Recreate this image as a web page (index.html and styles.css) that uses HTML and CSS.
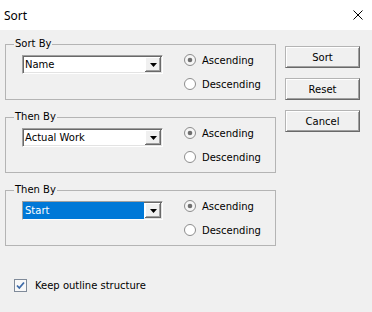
FILE: index.html
```html
<!DOCTYPE html>
<html>
<head>
<meta charset="utf-8">
<link rel="stylesheet" href="styles.css">
</head>
<body>
<div class="window">
  <div class="titlebar">
    <span class="title">Sort</span>
    <svg class="close" width="10" height="10" viewBox="0 0 10 10"><path d="M0.5 0.5 L9.5 9.5 M9.5 0.5 L0.5 9.5" stroke="#000" stroke-width="1"/></svg>
  </div>
  <div class="content">
    <div class="groups">
      <div class="group">
        <span class="group-label">Sort By</span>
        <div class="combo"><span class="combo-value">Name</span><span class="combo-btn"><svg width="7" height="4" viewBox="0 0 7 4"><polygon points="0,0 7,0 3.5,4" fill="#000"/></svg></span></div>
        <div class="radios">
          <div class="radio"><svg width="12" height="12" viewBox="0 0 12 12"><circle cx="6" cy="6" r="5.5" fill="#f6f6f6" stroke="#8c8c8c"/><circle cx="6" cy="6" r="2.3" fill="#6f6f6f"/></svg><span>Ascending</span></div>
          <div class="radio"><svg width="12" height="12" viewBox="0 0 12 12"><circle cx="6" cy="6" r="5.5" fill="#ffffff" stroke="#8c8c8c"/></svg><span>Descending</span></div>
        </div>
      </div>
      <div class="group">
        <span class="group-label">Then By</span>
        <div class="combo"><span class="combo-value">Actual Work</span><span class="combo-btn"><svg width="7" height="4" viewBox="0 0 7 4"><polygon points="0,0 7,0 3.5,4" fill="#000"/></svg></span></div>
        <div class="radios">
          <div class="radio"><svg width="12" height="12" viewBox="0 0 12 12"><circle cx="6" cy="6" r="5.5" fill="#f6f6f6" stroke="#8c8c8c"/><circle cx="6" cy="6" r="2.3" fill="#6f6f6f"/></svg><span>Ascending</span></div>
          <div class="radio"><svg width="12" height="12" viewBox="0 0 12 12"><circle cx="6" cy="6" r="5.5" fill="#ffffff" stroke="#8c8c8c"/></svg><span>Descending</span></div>
        </div>
      </div>
      <div class="group">
        <span class="group-label">Then By</span>
        <div class="combo"><span class="combo-value selected">Start</span><span class="combo-btn"><svg width="7" height="4" viewBox="0 0 7 4"><polygon points="0,0 7,0 3.5,4" fill="#000"/></svg></span></div>
        <div class="radios">
          <div class="radio"><svg width="12" height="12" viewBox="0 0 12 12"><circle cx="6" cy="6" r="5.5" fill="#f6f6f6" stroke="#8c8c8c"/><circle cx="6" cy="6" r="2.3" fill="#6f6f6f"/></svg><span>Ascending</span></div>
          <div class="radio"><svg width="12" height="12" viewBox="0 0 12 12"><circle cx="6" cy="6" r="5.5" fill="#ffffff" stroke="#8c8c8c"/></svg><span>Descending</span></div>
        </div>
      </div>
    </div>
    <div class="buttons">
      <button class="btn">Sort</button>
      <button class="btn">Reset</button>
      <button class="btn">Cancel</button>
    </div>
  </div>
  <div class="footer">
    <svg width="13" height="13" viewBox="0 0 13 13"><rect x="0.5" y="0.5" width="12" height="12" fill="#f8f8f8" stroke="#7f8a99"/><path d="M3 6.5 L5.3 9 L10 3.5" fill="none" stroke="#3d6aa8" stroke-width="1.8"/></svg>
    <span>Keep outline structure</span>
  </div>
</div>
</body>
</html>
```
FILE: styles.css
```css
body {
  margin: 0;
  background: #f0f0f0;
  font-family: "DejaVu Sans", sans-serif;
  font-size: 10px;
  color: #000;
}
.window {
  width: 372px;
  height: 312px;
  overflow: hidden;
}
.titlebar {
  height: 30px;
  box-sizing: border-box;
  background: #fff;
  display: flex;
  align-items: center;
  justify-content: space-between;
  padding: 0 9px 0 4px;
}
.title {
  font-family: "Noto Sans", sans-serif;
  font-size: 12px;
}
.content {
  display: flex;
  padding: 14px 0 0 5px;
}
.groups {
  width: 271px;
  display: flex;
  flex-direction: column;
  gap: 17px;
}
.group {
  position: relative;
  height: 56px;
  box-sizing: border-box;
  border: 1px solid #b4b4b4;
  display: flex;
  align-items: flex-start;
  padding-left: 16px;
}
.group-label {
  position: absolute;
  left: 8px;
  top: -8px;
  padding: 0 1px;
  line-height: 14px;
  background: #f0f0f0;
}
.combo {
  margin-top: 10px;
  width: 141px;
  height: 19px;
  box-sizing: border-box;
  background: #fff;
  border: 1px solid;
  border-color: #a0a0a0 #ffffff #ffffff #a0a0a0;
  box-shadow: inset 1px 1px #696969, inset -1px -1px #e3e3e3;
  display: flex;
}
.combo-value {
  flex: 1;
  margin: 1px 0 1px 1px;
  padding-left: 1px;
  line-height: 15px;
}
.combo-value.selected {
  background: #0078d7;
  color: #fff;
  margin: 0 0 0 0;
  padding-left: 2px;
  line-height: 17px;
}
.combo-btn {
  width: 16px;
  height: 15px;
  margin: 1px;
  background: #f0f0f0;
  box-shadow: inset -1px -1px #696969, inset 1px 1px #ffffff, inset -2px -2px #a0a0a0;
  display: flex;
  align-items: center;
  justify-content: center;
  padding-top: 1px;
  box-sizing: border-box;
}
.radios {
  margin-left: 21px;
  margin-top: 7px;
  display: flex;
  flex-direction: column;
  gap: 8px;
}
.radio {
  display: flex;
  align-items: center;
  gap: 6px;
  height: 16px;
}
.buttons {
  margin-left: 9px;
  margin-top: 2px;
  display: flex;
  flex-direction: column;
  gap: 10px;
}
.btn {
  width: 75px;
  height: 22px;
  box-sizing: border-box;
  font: inherit;
  color: #000;
  background: #f0f0f0;
  border: 1px solid;
  border-color: #b4b4b4 #696969 #696969 #b4b4b4;
  box-shadow: inset 1px 1px #ffffff, inset -1px -1px #a0a0a0;
  padding: 0;
}
.footer {
  display: flex;
  align-items: center;
  gap: 8px;
  padding: 33px 0 0 14px;
}
```
